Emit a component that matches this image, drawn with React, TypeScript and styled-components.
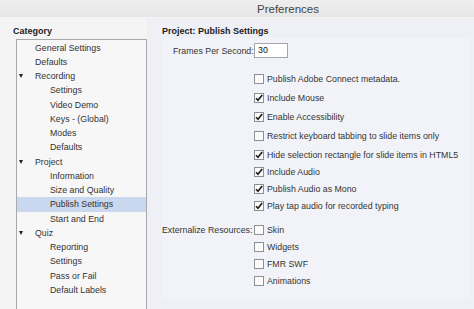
import React from "react";
import styled, { createGlobalStyle } from "styled-components";

const Global = createGlobalStyle`
  html, body { margin: 0; padding: 0; }
  body {
    width: 474px;
    height: 309px;
    overflow: hidden;
    background: #eef0f6;
    font-family: "Liberation Sans", Arial, sans-serif;
    color: #333;
  }
`;

const Window = styled.div`
  width: 474px;
  height: 309px;
  display: flex;
  flex-direction: column;
`;

const TitleBar = styled.div`
  height: 18px;
  flex: none;
  background: linear-gradient(#efefef, #e6e6e6);
  border-bottom: 1px solid #f6f6f6;
  font-size: 11.5px;
  line-height: 18px;
  color: #444;
  padding-left: 257px;
  box-sizing: border-box;
`;

const Body = styled.div`
  flex: 1;
  display: flex;
  min-height: 0;
`;

const Sidebar = styled.div`
  width: 147px;
  flex: none;
  display: flex;
  flex-direction: column;
  background: #f4f4f5;
  padding: 6px 0 0 13px;
  box-sizing: border-box;
`;

const Heading = styled.div`
  font-weight: bold;
  font-size: 9px;
  line-height: 14px;
  color: #222;
  white-space: nowrap;
`;

const Tree = styled.div`
  flex: 1;
  margin-left: 3px;
  margin-top: 1px;
  border: 1px solid #a9a9ad;
  border-bottom: none;
  background: #f7f7f8;
  padding-top: 0.5px;
`;

const TreeRow = styled.div<{ $level: number; $selected?: boolean }>`
  height: 14.25px;
  display: flex;
  align-items: center;
  position: relative;
  padding-left: ${(p) => (p.$level === 2 ? 33 : 18)}px;
  font-size: 8.8px;
  background: ${(p) => (p.$selected ? "#c9d7ef" : "transparent")};
  white-space: nowrap;
`;

const Arrow = styled.span`
  position: absolute;
  left: 2px;
  top: 5px;
  width: 0;
  height: 0;
  border-left: 2.5px solid transparent;
  border-right: 2.5px solid transparent;
  border-top: 4px solid #222;
`;

const Main = styled.div`
  flex: 1;
  display: flex;
  flex-direction: column;
  padding: 6px 4px 0 15px;
  box-sizing: border-box;
`;

const Panel = styled.div`
  background: #f2f3f8;
  height: 262px;
  display: flex;
  flex-direction: column;
`;

const FieldRow = styled.div`
  display: flex;
  align-items: center;
  margin-top: 5px;
  margin-left: 11px;
  gap: 6px;
  font-size: 8.8px;
`;

const FieldLabel = styled.span`
  width: 75px;
  text-align: right;
  white-space: nowrap;
`;

const TextBox = styled.div`
  width: 29px;
  height: 13px;
  border: 1px solid #a4a6ac;
  background: #fff;
  font-size: 8.8px;
  line-height: 13px;
  padding-left: 3px;
  color: #111;
`;

const Options = styled.div`
  display: flex;
  flex-direction: column;
  margin-left: 92px;
  margin-top: 12px;
`;

const Option = styled.div<{ $tight?: boolean }>`
  height: ${(p) => (p.$tight ? 17 : 18.8)}px;
  display: flex;
  align-items: center;
  gap: 3px;
  font-size: 8.8px;
  white-space: nowrap;
`;

const Box = styled.span`
  width: 8px;
  height: 8px;
  border: 1px solid #8e8f94;
  background: #fbfbfb;
  display: inline-flex;
  align-items: center;
  justify-content: center;
  flex: none;
`;

const Extern = styled.div`
  display: flex;
  margin-top: 7px;
`;

const ExternLabel = styled.div`
  width: 92px;
  font-size: 8.8px;
  height: 17px;
  display: flex;
  align-items: center;
  white-space: nowrap;
`;

const ExternList = styled.div`
  display: flex;
  flex-direction: column;
`;

const Check = ({ checked }: { checked: boolean }) => (
  <Box>
    {checked && (
      <svg width="8" height="8" viewBox="0 0 8 8">
        <path d="M1 4.2 L3 6.3 L7.2 1" fill="none" stroke="#1d1d1d" strokeWidth="1.6" />
      </svg>
    )}
  </Box>
);

const tree: [number, string, boolean?][] = [
  [1, "General Settings"],
  [1, "Defaults"],
  [0, "Recording"],
  [2, "Settings"],
  [2, "Video Demo"],
  [2, "Keys - (Global)"],
  [2, "Modes"],
  [2, "Defaults"],
  [0, "Project"],
  [2, "Information"],
  [2, "Size and Quality"],
  [2, "Publish Settings", true],
  [2, "Start and End"],
  [0, "Quiz"],
  [2, "Reporting"],
  [2, "Settings"],
  [2, "Pass or Fail"],
  [2, "Default Labels"],
];

const opts: [string, boolean, boolean][] = [
  ["Publish Adobe Connect metadata.", false, false],
  ["Include Mouse", true, false],
  ["Enable Accessibility", true, false],
  ["Restrict keyboard tabbing to slide items only", false, false],
  ["Hide selection rectangle for slide items in HTML5", true, false],
  ["Include Audio", true, true],
  ["Publish Audio as Mono", true, true],
  ["Play tap audio for recorded typing", true, true],
];

export default function App() {
  return (
    <Window>
      <Global />
      <TitleBar>Preferences</TitleBar>
      <Body>
        <Sidebar>
          <Heading>Category</Heading>
          <Tree>
            {tree.map(([lvl, label, sel], i) => (
              <TreeRow key={i} $level={lvl} $selected={sel}>
                {lvl === 0 && <Arrow />}
                {label}
              </TreeRow>
            ))}
          </Tree>
        </Sidebar>
        <Main>
          <Heading>Project: Publish Settings</Heading>
          <Panel>
            <FieldRow>
              <FieldLabel>Frames Per Second:</FieldLabel>
              <TextBox>30</TextBox>
            </FieldRow>
            <Options>
              {opts.map(([label, c, t]) => (
                <Option key={label} $tight={t}>
                  <Check checked={c} />
                  {label}
                </Option>
              ))}
            </Options>
            <Extern>
              <ExternLabel>Externalize Resources:</ExternLabel>
              <ExternList>
                {["Skin", "Widgets", "FMR SWF", "Animations"].map((l) => (
                  <Option key={l} $tight>
                    <Check checked={false} />
                    {l}
                  </Option>
                ))}
              </ExternList>
            </Extern>
          </Panel>
        </Main>
      </Body>
    </Window>
  );
}
